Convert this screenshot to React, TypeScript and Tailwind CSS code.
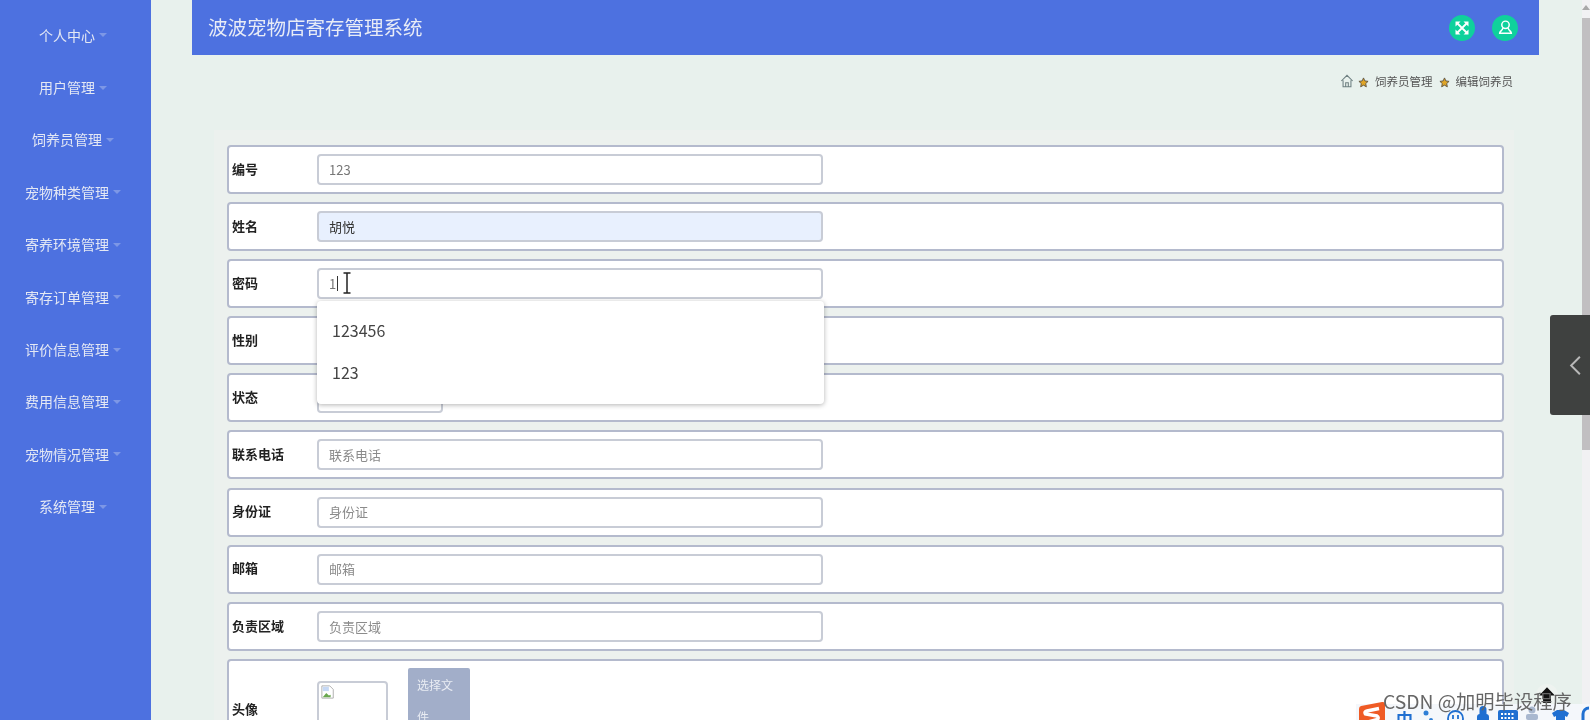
const navItems = [
  "个人中心",
  "用户管理",
  "饲养员管理",
  "宠物种类管理",
  "寄养环境管理",
  "寄存订单管理",
  "评价信息管理",
  "费用信息管理",
  "宠物情况管理",
  "系统管理",
];

const fields = [
  { label: "编号", value: "123" },
  { label: "姓名", value: "胡悦", filled: true },
  { label: "密码", value: "1", caret: true },
  { label: "性别", select: true },
  { label: "状态", select: true },
  { label: "联系电话", placeholder: "联系电话" },
  { label: "身份证", placeholder: "身份证" },
  { label: "邮箱", placeholder: "邮箱" },
  { label: "负责区域", placeholder: "负责区域" },
];

function Star() {
  return (
    <svg viewBox="0 0 24 24" className="h-[11px] w-[11px]">
      <path
        d="M12 2l3 6.6 7 .9-5.2 4.8 1.4 7.1L12 17.8 5.8 21.4l1.4-7.1L2 9.5l7-.9z"
        fill="#e0a526"
        stroke="#5c5240"
        strokeWidth="2"
      />
    </svg>
  );
}

function Field({ field }: { field: (typeof fields)[number] }) {
  return (
    <div className="flex h-[49px] items-center rounded-[4px] border-2 border-[#b4bacd] bg-white pl-[3px]">
      <label className="w-[85px] shrink-0 pb-[2px] text-[13px] font-bold text-[#222]">{field.label}</label>
      {field.select ? (
        <div className="h-[30px] w-[126px] rounded-[4px] border-2 border-[#c8ccd6] bg-white" />
      ) : (
        <div
          className={`flex h-[31px] w-[506px] items-center rounded-[4px] border-2 border-[#c8ccd6] px-[10px] text-[13px] ${
            field.filled ? "bg-[#e8f0fe] text-[#333]" : "bg-white text-[#777]"
          }`}
        >
          {field.value ?? <span className="text-[#8b8b8b]">{field.placeholder}</span>}
          {field.caret && <span className="ml-px h-[15px] w-px bg-[#333]" />}
        </div>
      )}
    </div>
  );
}

export default function App() {
  return (
    <div className="relative flex h-[720px] overflow-hidden bg-[#e8f1ed] blur-[0.4px] font-['Noto_Sans_CJK_SC','Noto_Sans',sans-serif]">
      <aside className="flex w-[151px] shrink-0 flex-col bg-[#4d71e0] pt-[9px]">
        {navItems.map((item) => (
          <div key={item} className="flex h-[52.4px] shrink-0 items-center justify-center gap-[4px] pr-[5px] text-[14px] text-[#e4e8f4]">
            {item}
            <span className="h-0 w-0 border-x-[4px] border-t-[4px] border-x-transparent border-t-[#7d97e6]" />
          </div>
        ))}
      </aside>

      <main className="min-w-0 flex-1 pl-[41px] pr-[51px]">
        <header className="flex h-[55px] items-center justify-between bg-[#4d71e0] pl-[16px] pr-[21px]">
          <h1 className="pb-[2px] text-[19.5px] text-[#e8ecf6]">波波宠物店寄存管理系统</h1>
          <div className="flex gap-[17px]">
            <div className="flex h-[26px] w-[26px] items-center justify-center rounded-full bg-[#0fd19c]">
              <svg viewBox="0 0 16 16" className="h-[16px] w-[16px]" fill="none" stroke="#fff" strokeWidth="1.8">
                <path d="M3.500 3.500l9 9M12.500 3.500l-9 9" />
                <path d="M1.500 6.500v-5h5zM9.500 1.500h5v5zM14.500 9.500v5h-5zM6.500 14.500h-5v-5z" fill="#fff" stroke="none" />
              </svg>
            </div>
            <div className="flex h-[26px] w-[26px] items-center justify-center rounded-full bg-[#0fd19c]">
              <svg viewBox="0 0 16 16" className="h-[17px] w-[17px]" fill="none" stroke="#fff" strokeWidth="1.4">
                <circle cx="8" cy="5.500" r="3.500" />
                <path d="M5.500 8.500C5 11 2.500 11.500 2.500 13.500h11c0-2-2.500-2.500-3-5" />
              </svg>
            </div>
          </div>
        </header>

        <nav className="flex h-[52px] items-center justify-end gap-[6px] pr-[26px] pt-[2px] text-[11.5px] text-[#555]">
          <svg viewBox="0 0 16 16" className="-mr-[2px] mb-[3px] h-[14px] w-[14px]" fill="none" stroke="#6d7f80" strokeWidth="1.2">
            <path d="M1.500 8L8 1.500 14.500 8M3.500 7v7.500h9V7M6.500 14.500V10h3v4.500" />
          </svg>
          <Star />
          <span>饲养员管理</span>
          <Star />
          <span>编辑饲养员</span>
        </nav>

        <section className="ml-[22px] mr-[25px] mt-[23px] flex flex-col gap-[8.1px] bg-[#ecf1ee] pl-[13px] pr-[10px] pt-[15px]">
          {fields.map((field) => (
            <Field key={field.label} field={field} />
          ))}
          <div className="flex h-[120px] shrink-0 rounded-[4px] border-2 border-[#b4bacd] bg-white pl-[3px] pt-[9px]">
            <label className="mt-[29px] w-[85px] shrink-0 text-[13px] font-bold text-[#222]">头像</label>
            <div className="mt-[11px] h-[80px] w-[71px] rounded-[4px] border-2 border-[#c8ccd6] p-[2px]">
              <svg viewBox="0 0 16 16" className="h-[14px] w-[14px]">
                <path d="M1 1h9l4 4v10H1z" fill="#fff" stroke="#a8a8a8" />
                <path d="M2 14l4-5 3 3 2-1v3z" fill="#6aa84f" />
                <path d="M2 2h7v5H2z" fill="#c5d8f5" />
              </svg>
            </div>
            <div className="-mt-[2px] ml-[20px] h-[90px] w-[62px] rounded-[2px] bg-[#a2aec9] px-[9px] py-[1px] text-[12px] leading-[32px] text-[#e9ecf3]">
              选择文件
            </div>
          </div>
        </section>
      </main>

      {/* password autocomplete */}
      <div className="absolute left-[317px] top-[301px] flex h-[103px] w-[507px] flex-col justify-center gap-[17px] rounded-[4px] bg-white pb-[3px] pl-[15px] text-[16px] leading-[25px] text-[#444] shadow-[0_1px_5px_rgba(0,0,0,0.3)]">
        <div>123456</div>
        <div>123</div>
      </div>

      {/* text cursor */}
      <svg viewBox="0 0 10 22" className="absolute left-[342px] top-[272px] h-[22px] w-[10px]" fill="none" stroke="#222" strokeWidth="1.500">
        <path d="M1.500 1H8.500M5 1v20M1.500 21H8.500" />
      </svg>

      {/* scrollbar */}
      <div className="absolute right-0 top-0 flex h-full w-[8px] flex-col bg-[#f1f1f3]">
        <div className="mx-auto mt-[5px] h-0 w-0 border-x-[4px] border-b-[5px] border-x-transparent border-b-[#a8a8a8]" />
        <div className="mt-[8px] h-[432px] bg-[#c1bfc1]" />
      </div>

      {/* side drawer toggle */}
      <div className="absolute right-0 top-[315px] flex h-[100px] w-[40px] items-center justify-end rounded-l-[3px] bg-[#3f4140] pr-[8px]">
        <svg viewBox="0 0 14 24" className="h-[21px] w-[13px]" fill="none" stroke="#b8b8b8" strokeWidth="2.200">
          <path d="M12 2L2 12l10 10" />
        </svg>
      </div>

      {/* back to top */}
      <div className="absolute left-[1536px] top-[684px] flex h-[22px] w-[22px] items-center justify-center rounded-full bg-[#eef3f0]">
        <svg viewBox="0 0 16 16" className="h-[18px] w-[18px]" fill="#111">
          <path d="M8 1L1 8.500h3.500V15h7V8.500H15z" />
        </svg>
      </div>

      {/* ime toolbar */}
      <div className="absolute bottom-0 left-[1356px] right-0 flex h-[16px] items-start bg-[#f4f7fb] pl-[1px] pt-[6px]">
        <svg viewBox="0 0 30 24" className="-mt-[9px] h-[24px] w-[30px] shrink-0">
          <path d="M4 5L25 1q3-.5 3 2v21H2V8q0-2.500 2-3z" fill="#ef5b25" />
          <path d="M22 7.500L10 10q-3 .6-1.500 3L20 15q2 1 .5 3.500L7 22" fill="none" stroke="#fff" strokeWidth="3.500" />
        </svg>
        <span className="ml-[9px] w-[17px] shrink-0 text-[17px] font-bold leading-[17px] text-[#1f6fd1]">中</span>
        <svg viewBox="0 0 10 14" className="ml-[10px] h-[14px] w-[10px] shrink-0" fill="#2f7fd6">
          <circle cx="3" cy="3" r="2.500" />
          <circle cx="8" cy="10" r="2" />
        </svg>
        <svg viewBox="0 0 17 17" className="ml-[14px] h-[17px] w-[17px] shrink-0" fill="none" stroke="#1f6fd1" strokeWidth="1.800">
          <circle cx="8.500" cy="8.500" r="7.500" />
          <path d="M6 5v4M11 5v4" />
        </svg>
        <svg viewBox="0 0 12 16" className="-mt-[4px] ml-[13px] h-[16px] w-[12px] shrink-0" fill="#1f6fd1">
          <rect x="2.500" width="7" height="16" rx="3.500" />
          <rect y="8" width="12" height="8" rx="3" />
        </svg>
        <svg viewBox="0 0 20 14" className="ml-[9px] h-[14px] w-[20px] shrink-0">
          <rect width="20" height="14" rx="2" fill="#1f6fd1" />
          <path d="M3 4h14M3 8h14" stroke="#fff" strokeWidth="2" strokeDasharray="2 1.500" />
        </svg>
        <svg viewBox="0 0 12 14" className="-mt-[4px] ml-[8px] h-[14px] w-[12px] shrink-0" fill="#a9b8cf">
          <circle cx="6" cy="4" r="3.500" />
          <rect y="8" width="12" height="6" rx="2" />
        </svg>
        <svg viewBox="0 0 17 14" className="ml-[14px] h-[14px] w-[17px] shrink-0" fill="#1f6fd1">
          <path d="M5 0h7l5 3-2 4-2-1v8H4V6L2 7 0 3z" />
        </svg>
        <svg viewBox="0 0 16 16" className="-mt-[4px] ml-[11px] h-[16px] w-[16px] shrink-0" fill="none" stroke="#1f6fd1" strokeWidth="3">
          <path d="M9 2a6 6 0 0 0-6 6v6" />
        </svg>
      </div>

      {/* watermark */}
      <div className="absolute left-[1383px] top-[689px] whitespace-nowrap text-[19.3px] leading-[24px] text-[#666]">
        CSDN @加明毕设程序
      </div>
    </div>
  );
}
